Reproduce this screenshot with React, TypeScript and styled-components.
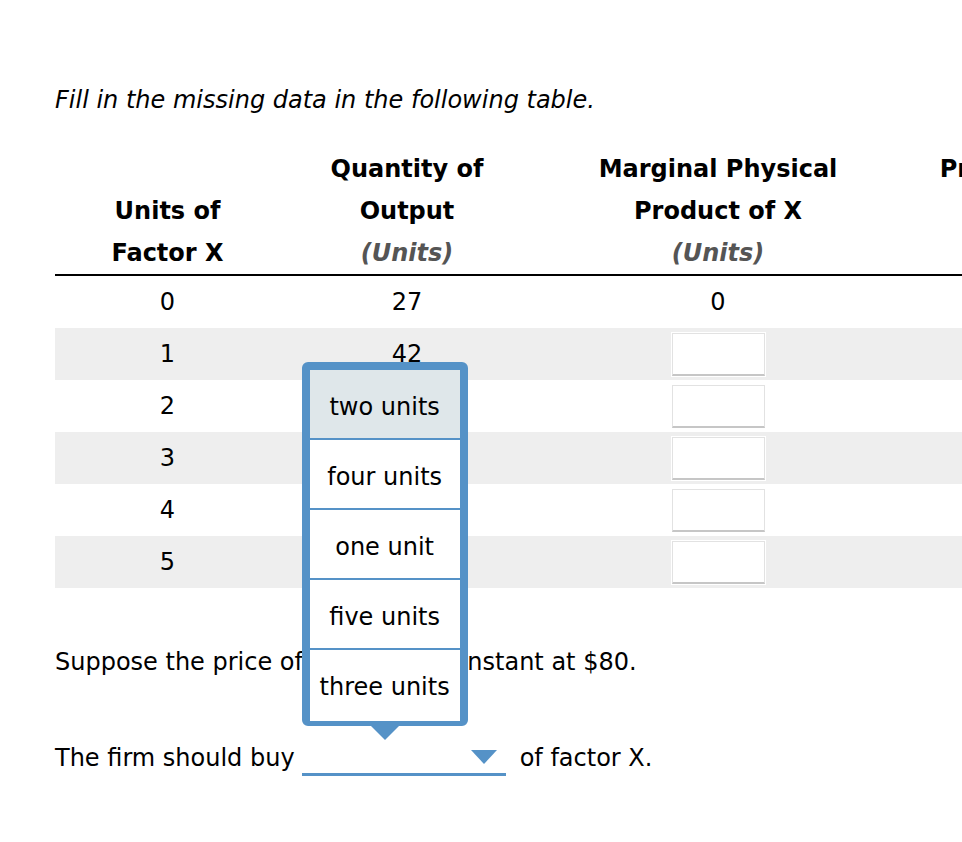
import React from "react";
import styled, { createGlobalStyle } from "styled-components";

const GlobalStyle = createGlobalStyle`
  html, body {
    margin: 0;
    padding: 0;
    background: #ffffff;
    overflow: hidden;
  }
  body {
    font-family: "DejaVu Sans", Verdana, sans-serif;
    color: #000000;
    font-size: 24px;
  }
`;

const BLUE = "#5592c7";

const Page = styled.div`
  width: 1300px;
  padding: 79px 0 0 55px;
  box-sizing: border-box;
`;

const Intro = styled.p`
  margin: 0;
  font-style: italic;
  font-size: 24px;
  line-height: 42px;
`;

const Table = styled.table`
  margin-top: 27px;
  border-collapse: separate;
  border-spacing: 0;
  table-layout: fixed;
  width: 1129px;
`;

const HeadCell = styled.th<{ $w: number }>`
  width: ${(p) => p.$w}px;
  padding: 0;
  font-weight: bold;
  font-size: 24px;
  line-height: 42px;
  text-align: center;
  vertical-align: bottom;
  white-space: nowrap;
  border-bottom: 2px solid #000000;
`;

const UnitNote = styled.span`
  font-style: italic;
  color: #555555;
`;

const Row = styled.tr<{ $shaded: boolean }>`
  height: 52px;
  background: ${(p) => (p.$shaded ? "#eeeeee" : "#ffffff")};
`;

const Cell = styled.td`
  padding: 0;
  text-align: center;
  vertical-align: middle;
  font-size: 24px;
  line-height: 28px;
`;

const InputBox = styled.div`
  display: block;
  margin: 1px auto 0;
  width: 93px;
  height: 43px;
  box-sizing: border-box;
  background: #ffffff;
  border: 1px solid #e2e2e2;
  border-bottom: 2px solid #c6c6c6;
  box-shadow: 0 0 0 1px #ffffff;
`;

const Sentence = styled.p<{ $top: number }>`
  margin: ${(p) => p.$top}px 0 0;
  font-size: 24px;
  line-height: 42px;
  white-space: nowrap;
`;

const SelectWrap = styled.span`
  position: relative;
  display: inline-block;
  margin-left: 7px;
  margin-right: 14px;
`;

const Select = styled.span`
  display: inline-flex;
  align-items: center;
  width: 204px;
  box-sizing: border-box;
  border-bottom: 3px solid ${BLUE};
  padding-right: 9px;
`;

const SelectValue = styled.span`
  flex: 1;
  line-height: 30px;
`;

const Caret = styled.svg`
  display: block;
  width: 26px;
  height: 14px;
  margin-bottom: 2px;
`;

const Popup = styled.div`
  position: absolute;
  left: 0;
  bottom: calc(100% + 11px);
  width: 166px;
  box-sizing: border-box;
  border: 8px solid ${BLUE};
  border-radius: 6px;
  background: #ffffff;
  display: flex;
  flex-direction: column;
  z-index: 5;

  &::after {
    content: "";
    position: absolute;
    left: 50%;
    top: 100%;
    margin-left: -14px;
    margin-top: 8px;
    border-left: 14px solid transparent;
    border-right: 14px solid transparent;
    border-top: 14px solid ${BLUE};
  }
`;

const Option = styled.div<{ $active?: boolean; $first?: boolean }>`
  height: 68px;
  box-sizing: content-box;
  padding-top: 3px;
  margin-bottom: -3px;
  display: flex;
  align-items: center;
  justify-content: center;
  font-size: 24px;
  white-space: nowrap;
  background: ${(p) => (p.$active ? "#dfe7ea" : "#ffffff")};
  border-top: ${(p) => (p.$first ? "none" : `2px solid ${BLUE}`)};
`;

const rows = [
  { x: "0", q: "27", mpp: "0" },
  { x: "1", q: "42", mpp: null },
  { x: "2", q: "", mpp: null },
  { x: "3", q: "", mpp: null },
  { x: "4", q: "", mpp: null },
  { x: "5", q: "", mpp: null },
];

const options = ["two units", "four units", "one unit", "five units", "three units"];

export default function App() {
  return (
    <>
      <GlobalStyle />
      <Page>
        <Intro>Fill in the missing data in the following table.</Intro>
        <Table>
          <thead>
            <tr>
              <HeadCell $w={225}>
                Units of
                <br />
                Factor X
              </HeadCell>
              <HeadCell $w={254}>
                Quantity of
                <br />
                Output
                <br />
                <UnitNote>(Units)</UnitNote>
              </HeadCell>
              <HeadCell $w={368}>
                Marginal Physical
                <br />
                Product of X
                <br />
                <UnitNote>(Units)</UnitNote>
              </HeadCell>
              <HeadCell $w={282}>
                Price of Output
                <br />
                (Dollars)
                <br />
                <UnitNote>(Dollars)</UnitNote>
              </HeadCell>
            </tr>
          </thead>
          <tbody>
            {rows.map((r, i) => (
              <Row key={r.x} $shaded={i % 2 === 1}>
                <Cell>{r.x}</Cell>
                <Cell>{r.q}</Cell>
                <Cell>{r.mpp !== null ? r.mpp : <InputBox />}</Cell>
                <Cell />
              </Row>
            ))}
          </tbody>
        </Table>
        <Sentence $top={53}>Suppose the price of factor X is constant at $80.</Sentence>
        <Sentence $top={54}>
          The firm should buy
          <SelectWrap>
            <Select>
              <SelectValue>{"\u00a0"}</SelectValue>
              <Caret viewBox="0 0 26 14">
                <polygon points="0,0 26,0 13,14" fill={BLUE} />
              </Caret>
            </Select>
            <Popup>
              {options.map((o, i) => (
                <Option key={o} $active={i === 0} $first={i === 0}>
                  {o}
                </Option>
              ))}
            </Popup>
          </SelectWrap>
          of factor X.
        </Sentence>
      </Page>
    </>
  );
}
